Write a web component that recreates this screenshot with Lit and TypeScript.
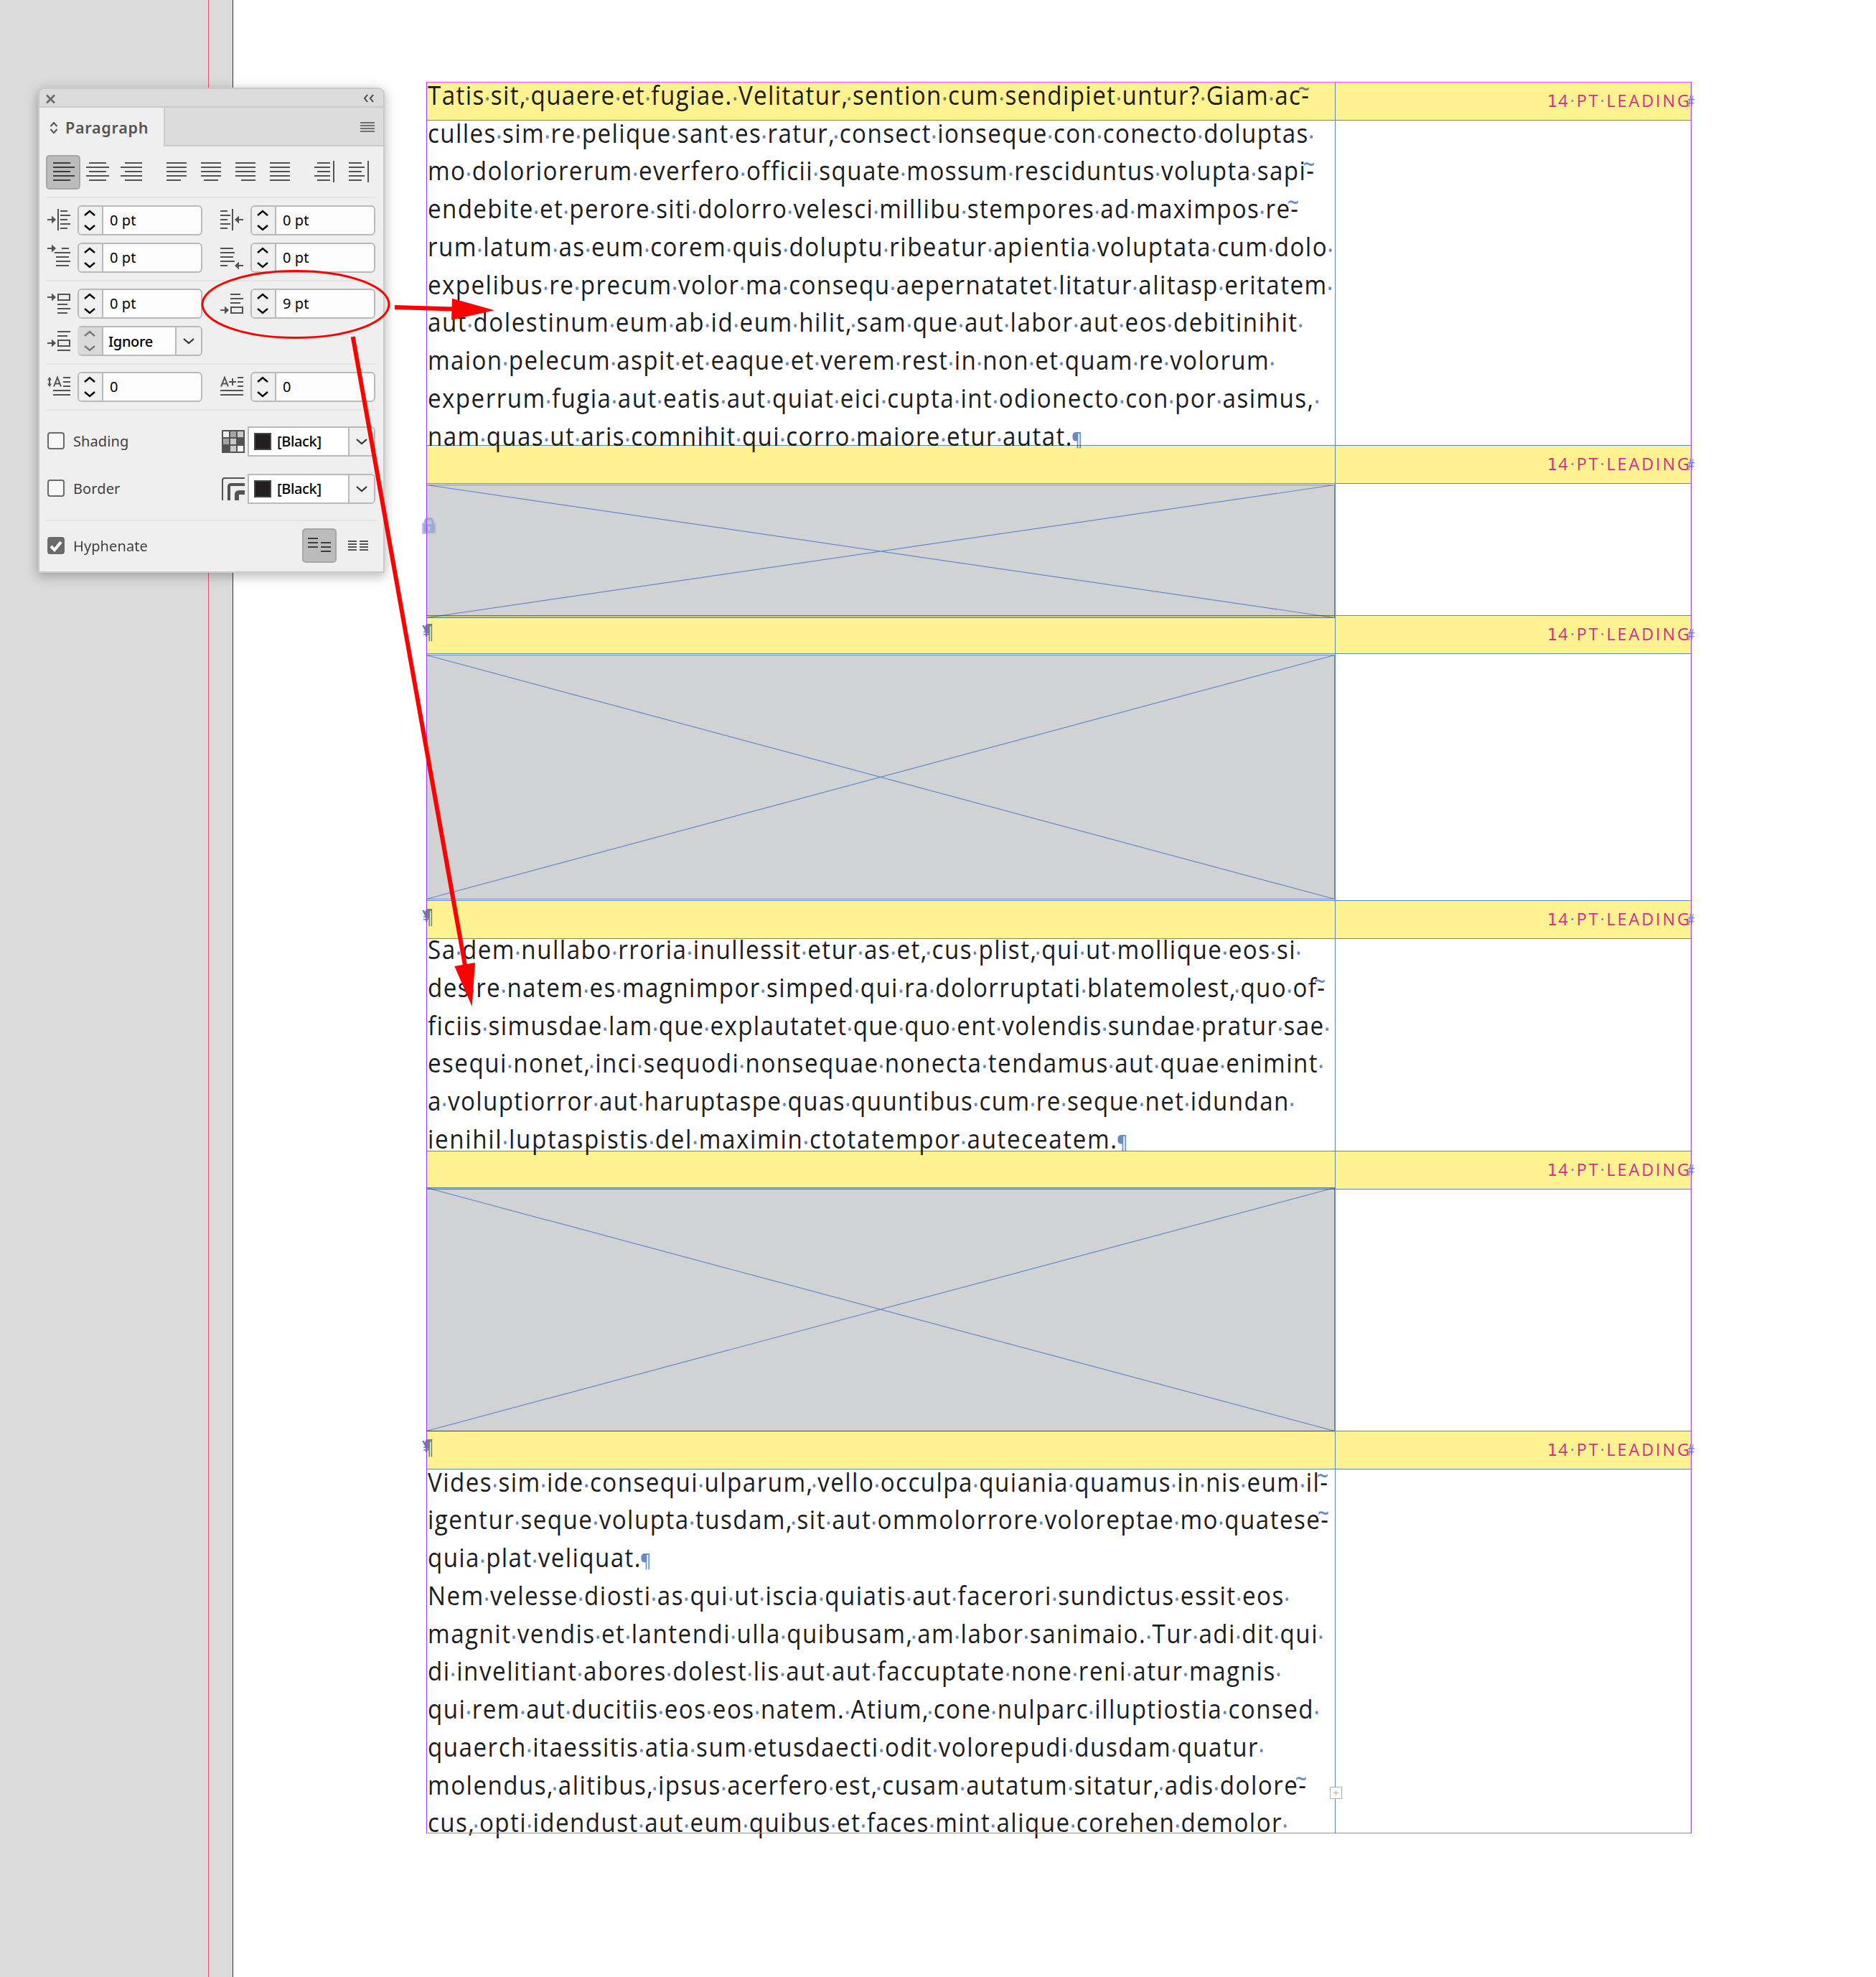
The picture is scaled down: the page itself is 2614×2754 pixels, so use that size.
import { LitElement, html, css, svg, nothing } from "lit";
import { customElement, property } from "lit/decorators.js";

type Ending = "space" | "hyphen" | "pilcrow";
interface Line { text: string; end: Ending; width: number }

const SCALE = 0.92;
const ln = (text: string, end: Ending, right: number): Line => ({
  text, end,
  width: right - 596.5 + (end === "space" ? 1.5 : -0.5),
});

const STORY_A: Line[] = [
  ln("Tatis sit, quaere et fugiae. Velitatur, sention cum sendipiet untur? Giam ac", "hyphen", 1825),
  ln("culles sim re pelique sant es ratur, consect ionseque con conecto doluptas", "space", 1829.5),
  ln("mo doloriorerum everfero officii squate mossum resciduntus volupta sapi", "hyphen", 1832),
  ln("endebite et perore siti dolorro velesci millibu stempores ad maximpos re", "hyphen", 1810),
  ln("rum latum as eum corem quis doluptu ribeatur apientia voluptata cum dolo", "space", 1856),
  ln("expelibus re precum volor ma consequ aepernatatet litatur alitasp eritatem", "space", 1855.5),
  ln("aut dolestinum eum ab id eum hilit, sam que aut labor aut eos debitinihit", "space", 1814.5),
  ln("maion pelecum aspit et eaque et verem rest in non et quam re volorum", "space", 1775),
  ln("experrum fugia aut eatis aut quiat eici cupta int odionecto con por asimus,", "space", 1837.5),
  ln("nam quas ut aris comnihit qui corro maiore etur autat.", "pilcrow", 1509),
];
const STORY_B: Line[] = [
  ln("Sa dem nullabo rroria inullessit etur as et, cus plist, qui ut mollique eos si", "space", 1812),
  ln("des re natem es magnimpor simped qui ra dolorruptati blatemolest, quo of", "hyphen", 1847),
  ln("ficiis simusdae lam que explautatet que quo ent volendis sundae pratur sae", "space", 1851.5),
  ln("esequi nonet, inci sequodi nonsequae nonecta tendamus aut quae enimint", "space", 1843),
  ln("a voluptiorror aut haruptaspe quas quuntibus cum re seque net idundan", "space", 1802.5),
  ln("ienihil luptaspistis del maximin ctotatempor auteceatem.", "pilcrow", 1572),
];
const STORY_C: Line[] = [
  ln("Vides sim ide consequi ulparum, vello occulpa quiania quamus in nis eum il", "hyphen", 1851),
  ln("igentur seque volupta tusdam, sit aut ommolorrore voloreptae mo quatese", "hyphen", 1852),
  ln("quia plat veliquat.", "pilcrow", 908),
  ln("Nem velesse diosti as qui ut iscia quiatis aut facerori sundictus essit eos", "space", 1795.7),
  ln("magnit vendis et lantendi ulla quibusam, am labor sanimaio. Tur adi dit qui", "space", 1843),
  ln("di invelitiant abores dolest lis aut aut faccuptate none reni atur magnis", "space", 1783.7),
  ln("qui rem aut ducitiis eos eos natem. Atium, cone nulparc illuptiostia consed", "space", 1837),
  ln("quaerch itaessitis atia sum etusdaecti odit volorepudi dusdam quatur", "space", 1760),
  ln("molendus, alitibus, ipsus acerfero est, cusam autatum sitatur, adis dolore", "hyphen", 1821),
  ln("cus, opti idendust aut eum quibus et faces mint alique corehen demolor", "space", 1793),
];

@customElement("story-text")
class StoryText extends LitElement {
  static styles = css`
    :host { display: flex; flex-direction: column; padding-left: 2px; font-family: "Open Sans", "Noto Sans", sans-serif; font-size: 36px; color: #1c1c1c; }
    .line { height: 52.76px; line-height: 52.76px; white-space: pre; }
    .run { display: inline-block; transform: scaleX(${SCALE as any}); transform-origin: 0 50%; font-kerning: none; font-variant-ligatures: none; }
    .dot { color: #658ac8; margin: 0 -1px; position: relative; top: 4px; }
    .tight { margin-left: -4px; }
    .soft { position: relative; }
    .tilde { position: absolute; left: -5px; top: -3px; line-height: 36px; font-size: 31px; font-weight: 600; color: #658ac8; letter-spacing: 0; }
    .pil { color: #658ac8; font-size: 25px; font-weight: 600; margin-left: -2px; }
  `;
  @property({ attribute: false }) lines: Line[] = [];

  private words(text: string) {
    const w = text.split(" ");
    return w.map((word, i) => html`${i ? html`<span class="dot ${w[i - 1].endsWith(",") ? "tight" : ""}">·</span>` : nothing}${word}`);
  }
  private ending(end: Ending) {
    if (end === "space") return html`<span class="dot">·</span>`;
    if (end === "pilcrow") return html`<span class="pil">¶</span>`;
    return html`<span class="soft">-<span class="tilde">~</span></span>`;
  }
  firstUpdated() {
    // Track each line so that it ends at its composed width.
    this.renderRoot.querySelectorAll<HTMLElement>(".run").forEach((el, i) => {
      const line = this.lines[i];
      const natural = el.getBoundingClientRect().width / SCALE;
      el.style.letterSpacing = `${(line.width / SCALE - natural) / line.text.length}px`;
    });
  }
  render() {
    return this.lines.map((l) => html`<div class="line"><span class="run">${this.words(l.text)}${this.ending(l.end)}</span></div>`);
  }
}

@customElement("leading-band")
class LeadingBand extends LitElement {
  static styles = css`
    :host { display: block; mix-blend-mode: multiply; }
    .band { height: 100%; box-sizing: border-box; background: #fff391; border: solid #6088c4; border-width: 1px 0; position: relative;
      display: flex; justify-content: flex-end; align-items: flex-start; font-family: "Open Sans", sans-serif; }
    .first { border-top-color: #ff50e8; }
    .label { color: #d62e8a; font-size: 23.5px; line-height: 32px; letter-spacing: 2.85px; margin: 9px 0 0 0; white-space: pre; }
    .one { font-family: "DejaVu Sans", sans-serif; font-size: 22.5px; letter-spacing: 1px; }
    .dot { color: #658ac8; }
    .end { position: absolute; right: -5px; top: 14px; font-size: 21px; line-height: 24px; color: #658ac8; transform: scaleX(.8); transform-origin: 100% 50%; }
    .mark { position: absolute; left: -6px; top: 8px; color: #5b80c0; line-height: 24px; font-size: 22px; font-weight: 600; }
    .pil { position: absolute; left: 3px; top: 2px; font-size: 26px; color: #688878; font-weight: 700; transform: scaleX(.75); transform-origin: 0 50%; }
  `;
  @property({ type: Boolean }) first = false;
  @property({ type: Boolean }) marks = false;
  render() {
    const dot = html`<span class="dot">·</span>`;
    return html`<div class="band ${this.first ? "first" : ""}">
      ${this.marks ? html`<span class="mark">¥<span class="pil">¶</span></span>` : nothing}
      <span class="label"><span class="one">1</span>4${dot}PT${dot}LEADING</span><span class="end">#</span>
    </div>`;
  }
}

const L = (y: number, a: number, b: number) => svg`<path d="M${a} ${y}H${b}"/>`;
const V = (x: number, a: number, b: number) => svg`<path d="M${x} ${a}V${b}"/>`;
const arrowR = (y: number) => svg`<path d="M0 ${y}H7"/><path class="fill" d="M6 ${y - 5.5}L12 ${y}L6 ${y + 5.5}Z"/>`;
const arrowL = (y: number) => svg`<path d="M25 ${y}H32"/><path class="fill" d="M26 ${y - 5.5}L20 ${y}L26 ${y + 5.5}Z"/>`;
const rows = (r: number[][]) => r.map((x) => L(x[0], x[1], x[2]));
const five = (a: number[], b: number[], last = a) => rows([[11, ...a], [17, ...b], [23, ...a], [29, ...b], [35, ...last]]);

const ALIGN = [
  [five([10, 34], [10, 40]), five([12, 36], [8, 40]), five([14, 38], [8, 38])],
  [five([10, 38], [10, 38], [10, 30]), five([10, 38], [10, 38], [14, 34]), five([10, 38], [10, 38], [18, 38]), five([10, 38], [10, 38])],
  [[...five([14, 32], [10, 32]), V(37, 8, 38)], [...five([10, 28], [10, 32]), V(37, 8, 38)]],
];

const GLYPH: Record<string, unknown> = {
  leftIndent: [arrowR(20), V(15, 5, 35), rows([[8, 18, 28], [14, 18, 32], [20, 18, 28], [26, 18, 32], [32, 18, 28]])],
  rightIndent: [arrowL(20), V(17, 5, 35), rows([[8, 0, 10], [14, 0, 14], [20, 0, 10], [26, 0, 14], [32, 0, 10]])],
  firstIndent: [arrowR(8), rows([[8, 20, 30], [14, 10, 32], [20, 12, 30], [26, 12, 32], [32, 12, 30]])],
  lastIndent: [arrowL(32), rows([[8, 0, 18], [14, 0, 20], [20, 0, 18], [26, 0, 20], [32, 0, 10]])],
  spaceBefore: [arrowR(12), svg`<path d="M15 8H31V16H15Z"/>`, rows([[22, 14, 28], [28, 14, 32], [34, 14, 28]])],
  spaceAfter: [arrowR(30), svg`<path d="M15 26H31V34H15Z"/>`, rows([[8, 14, 28], [14, 14, 32], [20, 14, 28]])],
  spaceBetween: [arrowR(24), svg`<path d="M15 20H31V28H15Z"/>`, rows([[8, 14, 32], [14, 14, 28], [34, 14, 32]])],
  dropLines: [svg`<path d="M3 9V19"/><path class="fill" d="M0 11.5L3 7L6 11.5ZM0 16.5L3 21L6 16.5Z"/><path d="M9 20.5L14 8L19 20.5M10.5 16.5H17.5"/>`, rows([[8, 22, 32], [14, 22, 32], [20, 22, 32], [26, 8, 32], [32, 8, 32]])],
  dropChars: [svg`<path d="M1 20.5L6 8L11 20.5M2.5 16.5H9.5M12 14H22M17 9V19"/>`, rows([[8, 24, 32], [14, 24, 32], [20, 24, 32], [26, 0, 32], [32, 0, 32]])],
};

@customElement("paragraph-panel")
class ParagraphPanel extends LitElement {
  static styles = css`
    :host { display: block; font-family: "Noto Sans", "Open Sans", sans-serif; }
    * { box-sizing: border-box; }
    svg { display: block; flex: none; fill: none; stroke: #535353; stroke-width: 2; }
    .fill { fill: #535353; stroke: none; }
    .panel { width: 483px; height: 676px; background: #efefef; border: 2px solid #c9c9c9; border-radius: 9px 9px 0 0; box-shadow: 0 4px 16px 1px rgba(0,0,0,.27); overflow: hidden; }
    .title { height: 26px; background: #dbdbdb; border-bottom: 2px solid #cbcbcb; display: flex; justify-content: space-between; padding: 7px 13px 0 9px; }
    .tabs { display: flex; height: 54px; }
    .tab { width: 173px; display: flex; align-items: center; padding: 1px 0 0 14px; gap: 10px; font-weight: 600; font-size: 21.5px; letter-spacing: .75px; color: #555; }
    .rest { flex: 1; background: #dbdbdb; border: solid #cbcbcb; border-width: 0 0 2px 2px; display: flex; justify-content: flex-end; padding: 19px 12px 0 0; }
    .body { padding: 12px 11px 0 9px; }
    .aligns { display: flex; gap: 14px; }
    .group { display: flex; }
    .btn { width: 48px; height: 48px; border: 2px solid transparent; border-radius: 5px; }
    .btn svg { margin: -2px; }
    .on { background: #bcbcbc; border-color: #a6a6a6; }
    .on svg { stroke: #3c3c3c; }
    .rule { height: 2px; background: #e4e4e4; margin: 10px 0; }
    .row { display: flex; justify-content: space-between; padding-left: 2px; height: 42px; }
    .row + .row { margin-top: 10px; }
    .cell { display: flex; gap: 10px; }
    .field { width: 174px; height: 42px; border: 2px solid #b9b9b9; border-radius: 6px; background: #fcfcfc; display: flex; overflow: hidden; font-size: 20px; color: #000; }
    .spin { width: 34px; border-right: 2px solid #b9b9b9; background: #f0f0f0; }
    .spin svg { stroke: #000; stroke-width: 2.4; }
    .value { flex: 1; padding-left: 9px; line-height: 37px; white-space: pre; letter-spacing: .1px; }
    .ignore .spin { background: #dadada; }
    .ignore .spin svg { stroke: #777; }
    .ignore { border-left-color: #dadada; background: linear-gradient(#dadada,#dadada) 0 0 / 32px no-repeat #fcfcfc; }
    .ignore .value { padding-left: 7px; line-height: 39px; letter-spacing: -.3px; font-weight: 500; }
    .drop { width: 36px; border-left: 2px solid #b9b9b9; background: #f0f0f0; }
    .drop svg { stroke: #333; stroke-width: 2.2; }
    .combo { width: 178px; border-radius: 0 6px 6px 0; background: #fff; font-weight: 500; }
    .combo .value { padding-left: 8px; line-height: 38px; letter-spacing: -.35px; }
    .swatch { width: 24px; height: 24px; margin: 7px 0 0 7px; background: #231f20; border: 2px solid #444; }
    .paint { display: flex; gap: 4px; }
    .paint > svg { margin-top: 5px; }
    .check { display: flex; align-items: center; gap: 12px; font-size: 20px; color: #3f3f3f; letter-spacing: .1px; height: 40px; }
    .box { width: 24px; height: 24px; border: 2px solid #6a6a6a; border-radius: 4px; background: #f6f6f6; }
    .checked { background: #6a6a6a; }
    .checked svg { margin: -2px; stroke: #fff; stroke-width: 4; }
    .check.hy { height: 48px; letter-spacing: .1px; }
  `;
  private spinner() {
    return html`<div class="spin"><svg width="32" height="38" viewBox="0 0 32 38"><path d="M8 12L15 6L22 12M8 26L15 32L22 26"/></svg></div>`;
  }
  private glyph(name: string) {
    return html`<svg width="32" height="42" viewBox="0 0 32 42">${GLYPH[name]}</svg>`;
  }
  private num(icon: string, value: string) {
    return html`<div class="cell">${this.glyph(icon)}<div class="field">${this.spinner()}<div class="value">${value}</div></div></div>`;
  }
  private drop() {
    return html`<div class="drop"><svg width="34" height="38" viewBox="0 0 34 38"><path d="M10 16L17 22L24 16"/></svg></div>`;
  }
  private combo(icon: unknown) {
    return html`<div class="paint"><svg width="32" height="32" viewBox="0 0 32 32">${icon}</svg>
      <div class="field combo"><div class="swatch"></div><div class="value">[Black]</div>${this.drop()}</div></div>`;
  }
  render() {
    const tones = ["#f4f4f4", "#a4a4a4", "#cacaca", "#a4a4a4", "#cacaca", "#535353", "#535353", "#cacaca", "#f4f4f4"];
    const shade = svg`<rect width="32" height="32" fill="#535353" stroke="none"/>${tones.map((t, i) =>
      svg`<rect x=${2 + (i % 3) * 10} y=${2 + Math.floor(i / 3) * 10} width="8" height="8" fill=${t} stroke="none"/>`)}`;
    const edge = svg`<path d="M1 32V4Q1 1 4 1H32"/><path stroke-width="4" d="M10 32V13Q10 10 13 10H32"/><path stroke-width="6" d="M21 32V24Q21 21 24 21H32"/>`;
    return html`<div class="panel">
      <div class="title">
        <svg width="13" height="13" viewBox="0 0 13 13"><path stroke="#6e6e6e" stroke-width="2.8" d="M1 1.5L12 12.5M12 1.5L1 12.5"/></svg>
        <svg width="15" height="12" viewBox="0 0 15 12"><path stroke="#444" d="M6 1L2 6L6 11M14 1L10 6L14 11"/></svg>
      </div>
      <div class="tabs">
        <div class="tab"><svg width="12" height="18" viewBox="0 0 12 18"><path d="M1.5 7L6 2L10.5 7M1.5 11L6 16L10.5 11"/></svg>Paragraph</div>
        <div class="rest"><svg width="20" height="16" viewBox="0 0 20 16"><path stroke="#707070" d="M0 2H20M0 6H20M0 10H20M0 14H20"/></svg></div>
      </div>
      <div class="body">
        <div class="aligns">${ALIGN.map((g, gi) => html`<div class="group">${g.map((d, i) =>
          html`<div class="btn ${gi + i === 0 ? "on" : ""}"><svg width="48" height="48" viewBox="0 0 48 48">${d}</svg></div>`)}</div>`)}</div>
        <div class="rule"></div>
        <div class="row">${this.num("leftIndent", "0 pt")}${this.num("rightIndent", "0 pt")}</div>
        <div class="row">${this.num("firstIndent", "0 pt")}${this.num("lastIndent", "0 pt")}</div>
        <div class="rule"></div>
        <div class="row">${this.num("spaceBefore", "0 pt")}${this.num("spaceAfter", "9 pt")}</div>
        <div class="row"><div class="cell">${this.glyph("spaceBetween")}<div class="field ignore">${this.spinner()}<div class="value">Ignore</div>${this.drop()}</div></div></div>
        <div class="rule"></div>
        <div class="row">${this.num("dropLines", "0")}${this.num("dropChars", "0")}</div>
        <div class="rule" style="margin-bottom:22px"></div>
        <div class="row"><div class="check"><div class="box"></div>Shading</div>${this.combo(shade)}</div>
        <div class="row" style="margin-top:24px"><div class="check"><div class="box"></div>Border</div>${this.combo(edge)}</div>
        <div class="rule" style="margin-top:22px"></div>
        <div class="row" style="height:48px">
          <div class="check hy"><div class="box checked"><svg width="24" height="24" viewBox="0 0 24 24"><path d="M5 13L10 18L19 7"/></svg></div>Hyphenate</div>
          <div class="group" style="gap:6px">
            <div class="btn on"><svg width="48" height="48" viewBox="0 0 48 48">${rows([[14, 8, 22], [20, 8, 22], [26, 8, 22], [20, 26, 40], [26, 26, 40], [32, 26, 40]])}</svg></div>
            <div class="btn"><svg width="48" height="48" viewBox="0 0 48 48">${rows([18, 22, 26, 30].flatMap((y) => [[y, 10, 22], [y, 26, 38]]))}</svg></div>
          </div>
        </div>
      </div>
    </div>`;
  }
}

@customElement("app-root")
class AppRoot extends LitElement {
  static styles = css`
    :host { display: block; }
    .canvas { position: relative; display: flex; width: 2614px; height: 2754px; background: #dbdbdb; overflow: hidden; isolation: isolate; }
    .bleed { width: 290px; border-right: 1px solid #f0566c; flex: none; }
    .board { width: 33px; flex: none; }
    .page { flex: 1; background: #fff; border-left: 1px solid #333; padding: 114px 0 0 269px; }
    .frame { position: relative; width: 1763px; height: 2440px; display: grid; }
    .layer { grid-area: 1 / 1; display: flex; flex-direction: column; min-height: 0; }
    .stories { width: 1266px; }
    .bands { mix-blend-mode: multiply; }
    .pic { display: block; width: 1266px; flex: none; }
    leading-band { flex: none; height: 54px; }
    story-text { flex: none; }
    .edges { grid-area: 1 / 1; border: 1px solid #9a3bff; border-top-color: #ff50e8; border-bottom-color: #ee58ea; z-index: 2; }
    .column { grid-area: 1 / 1; width: 1266px; border-right: 1px solid #6088c4; z-index: 1; }
    .plus { position: absolute; z-index: 3; left: 1259px; top: 2375px; }
    .lock { position: absolute; z-index: 1; left: -6px; top: 606px; }
    .panel { position: absolute; left: 53px; top: 122px; z-index: 4; }
    .notes { position: absolute; left: 0; top: 0; z-index: 5; }
  `;
  private pic(h: number, gap: number) {
    return html`<svg class="pic" style="margin-top:${gap}px" width="1266" height=${h} viewBox="0 0 1266 ${h}">
      <rect x=".5" y=".5" width="1265" height=${h - 1} fill="#d0d2d4" stroke="#6088c4"/>
      <path d="M0 .5L1266 ${h - 0.5}M0 ${h - 0.5}L1266 .5" stroke="#6488cc" stroke-width="1.2"/></svg>`;
  }
  render() {
    return html`<div class="canvas">
      <div class="bleed"></div><div class="board"></div>
      <div class="page">
        <div class="frame">
          <div class="layer">${this.pic(186, 561)}${this.pic(341, 51)}${this.pic(340, 401)}</div>
          <div class="layer stories">
            <story-text style="margin-top:-7.1px" .lines=${STORY_A}></story-text>
            <story-text style="margin-top:662.7px" .lines=${STORY_B}></story-text>
            <story-text style="margin-top:425.1px" .lines=${STORY_C}></story-text>
          </div>
          <div class="layer bands">
            <leading-band first></leading-band>
            <leading-band style="margin-top:452px"></leading-band>
            <leading-band marks style="margin-top:183px"></leading-band>
            <leading-band marks style="margin-top:343px"></leading-band>
            <leading-band style="margin-top:295px"></leading-band>
            <leading-band marks style="margin-top:336px"></leading-band>
          </div>
          <div class="column"></div>
          <div class="edges"></div>
          <svg class="plus" width="17" height="17" viewBox="0 0 17 17"><path d="M.5 .5H16.5V16.5H.5Z" fill="#fff" stroke="#e89a7c"/><path d="M5 8.5H12M8.5 5V12" stroke="#e89a7c"/></svg>
          <svg class="lock" width="20" height="24" viewBox="0 0 20 24"><path d="M0 9Q1 8 2 8Q3 0 10 0Q17 0 18 8L20 9V24H0Z" fill="#c4c4c6"/><path d="M5 11V8Q5 2.5 10 2.5Q15 2.5 15 8V11" fill="none" stroke="#98acdf" stroke-width="2.4"/><path d="M2 10H18V22H2Z" fill="#98acdf"/><path d="M10 13A2.3 2.3 0 0 1 11.3 17V20H8.7V17A2.3 2.3 0 0 1 10 13Z" fill="#c4c4c6"/></svg>
        </div>
      </div>
      <paragraph-panel class="panel"></paragraph-panel>
      <svg class="notes" width="720" height="1420" viewBox="0 0 720 1420">
        <ellipse cx="412" cy="424" rx="130" ry="46.5" fill="none" stroke="#f00" stroke-width="3"/>
        <path d="M550 428L632 430.5M491.7 469L648 1345" stroke="#f00" stroke-width="6"/>
        <path d="M630 415.7L689 432.3L629 445.7ZM633.3 1346L662 1341L657.7 1402Z" fill="#f00"/>
      </svg>
    </div>`;
  }
}
